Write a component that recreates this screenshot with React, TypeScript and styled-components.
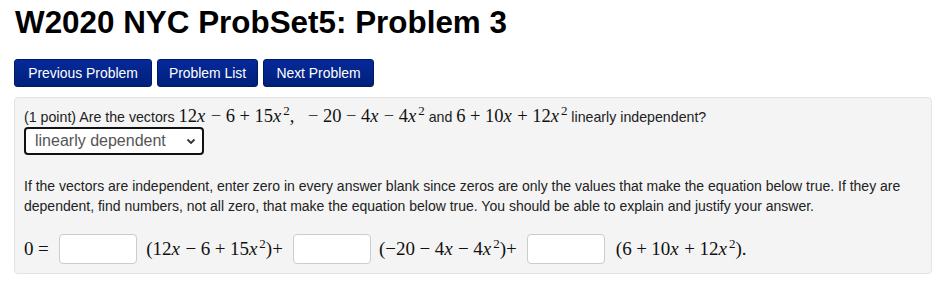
import styled, { createGlobalStyle } from "styled-components";

const GlobalStyle = createGlobalStyle`
  body {
    margin: 0;
    background: #fff;
    font-family: "Liberation Sans", Arial, sans-serif;
    color: #222;
  }
`;

const Page = styled.div`
  padding: 7px 14px 0 14px;
  width: 918px;
`;

const Title = styled.h1`
  margin: 0 0 0 1px;
  font-size: 31.4px;
  font-weight: bold;
  line-height: 31px;
  color: #000;
`;

const NavBar = styled.div`
  display: flex;
  gap: 5px;
  margin-top: 21px;
`;

const NavButton = styled.button<{ $w: number }>`
  width: ${(p) => p.$w}px;
  height: 28px;
  border: 1px solid #001a5e;
  border-radius: 3px;
  background: linear-gradient(to bottom, #06299a, #00207a);
  color: #fff;
  font-family: "Liberation Sans", Arial, sans-serif;
  font-size: 13.9px;
  padding: 0;
  cursor: pointer;
`;

const Panel = styled.div`
  margin-top: 10px;
  background: #f4f4f4;
  border: 1px solid #e3e3e3;
  border-radius: 4px;
  padding: 8px 9px 9px 9px;
  font-size: 14px;
  line-height: 20px;
`;

const Question = styled.div`
  height: 20px;
  white-space: nowrap;
  font-size: 14.2px;
`;

const Select = styled.div`
  display: flex;
  align-items: center;
  justify-content: space-between;
  box-sizing: border-box;
  width: 180px;
  height: 28px;
  margin-top: 1px;
  border: 2px solid #111;
  border-radius: 4px;
  background: #fff;
  padding: 0 6px 0 9px;
  color: #555;
  font-size: 16px;
`;

const Instructions = styled.p`
  margin: 21px 0 0 0;
`;

const EqRow = styled.div`
  display: flex;
  align-items: center;
  margin-top: 17px;
  height: 31px;
`;

const AnswerBox = styled.input<{ $ml: number; $mr: number }>`
  box-sizing: border-box;
  width: 78px;
  height: 30px;
  margin-left: ${(p) => p.$ml}px;
  margin-right: ${(p) => p.$mr}px;
  border: 1px solid #ccc;
  border-radius: 4px;
  background: #fff;
`;

const M = styled.span<{ $size?: number }>`
  font-family: "Liberation Serif", "Times New Roman", serif;
  font-size: ${(p) => p.$size ?? 19}px;
  color: #111;
  white-space: nowrap;
`;

const V = styled.i`
  font-style: italic;
  padding-right: 1px;
`;

const Op = styled.span`
  padding: 0 4.5px;
`;

const Sup = styled.sup`
  font-size: 13px;
  line-height: 0;
  vertical-align: 7px;
  padding-left: 1px;
`;

function X2() {
  return (
    <>
      <V>x</V>
      <Sup>2</Sup>
    </>
  );
}

function Chevron() {
  return (
    <svg width="10" height="7" viewBox="0 0 10 7">
      <path d="M1.5 1.5 L5 5 L8.5 1.5" fill="none" stroke="#333" strokeWidth="1.8" />
    </svg>
  );
}

export default function App() {
  return (
    <>
      <GlobalStyle />
      <Page>
        <Title>W2020 NYC ProbSet5: Problem 3</Title>
        <NavBar>
          <NavButton $w={138}>Previous Problem</NavButton>
          <NavButton $w={101}>Problem List</NavButton>
          <NavButton $w={111}>Next Problem</NavButton>
        </NavBar>
        <Panel>
          <Question>
            (1 point) Are the vectors{" "}
            <M $size={18.5}>
              12<V>x</V>
              <Op>−</Op>6<Op>+</Op>15
              <X2 />, &nbsp;<Op>−</Op>20<Op>−</Op>4<V>x</V>
              <Op>−</Op>4
              <X2 />
            </M>{" "}
            and{" "}
            <M $size={18.5}>
              6<Op>+</Op>10<V>x</V>
              <Op>+</Op>12
              <X2 />
            </M>{" "}
            linearly independent?
          </Question>
          <Select>
            <span>linearly dependent</span>
            <Chevron />
          </Select>
          <Instructions>
            If the vectors are independent, enter zero in every answer blank since zeros are only the
            values that make the equation below true. If they are dependent, find numbers, not all
            zero, that make the equation below true. You should be able to explain and justify your
            answer.
          </Instructions>
          <EqRow>
            <M>
              0<Op>=</Op>
            </M>
            <AnswerBox $ml={6} $mr={9} />
            <M>
              (12<V>x</V>
              <Op>−</Op>6<Op>+</Op>15
              <X2 />
              )+
            </M>
            <AnswerBox $ml={10} $mr={8} />
            <M>
              (−20<Op>−</Op>4<V>x</V>
              <Op>−</Op>4
              <X2 />
              )+
            </M>
            <AnswerBox $ml={10} $mr={11} />
            <M>
              (6<Op>+</Op>10<V>x</V>
              <Op>+</Op>12
              <X2 />
              ).
            </M>
          </EqRow>
        </Panel>
      </Page>
    </>
  );
}
